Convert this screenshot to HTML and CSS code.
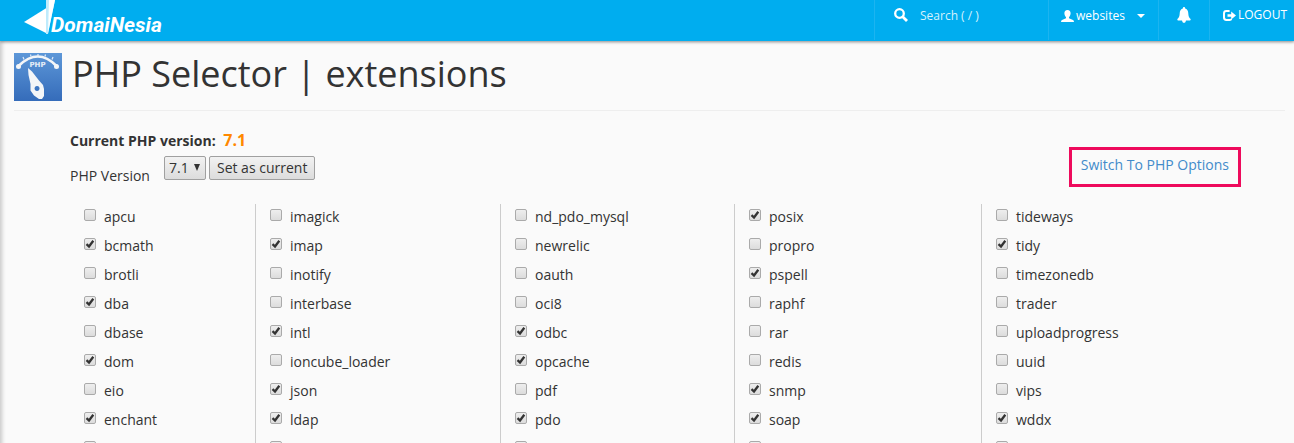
FILE: index.html
```html
<!DOCTYPE html>
<html lang="en">
<head>
    <meta charset="UTF-8">
    <meta name="viewport" content="width=device-width, initial-scale=1.0">
    <title>PHP Selector | extensions</title>
    <link rel="stylesheet" href="styles.css">
</head>
<body>
    <header class="topbar">
        <a href="#" class="brand" aria-label="DomaiNesia">
            <svg width="150" height="41" viewBox="0 0 150 41">
                <path d="M0 22 L24 7 L24 34 Z" fill="#fff"/>
                <path d="M22 0 H31 L24 34 H22 Z" fill="#bfebfc"/>
                <path d="M25 0 H31 L24 33 Z" fill="#fff"/>
                <text x="27" y="32" class="brand-text">DomaiNesia</text>
            </svg>
        </a>
        <nav class="nav">
            <div class="nav-item nav-search">
                <label for="search" aria-label="Search">
                    <svg width="14" height="14" viewBox="0 0 14 14">
                        <circle cx="5.5" cy="5.5" r="4.3" fill="none" stroke="#fff" stroke-width="2.3"/>
                        <path d="M8.7 8.7 L13 13" stroke="#fff" stroke-width="2.8"/>
                    </svg>
                </label>
                <input type="text" id="search" placeholder="Search ( / )">
            </div>
            <a href="#" class="nav-item nav-user">
                <svg width="13" height="12" viewBox="0 0 13 12">
                    <path d="M6.5 0 C8.6 0 9.7 1.4 9.6 3.4 C9.5 5 8.9 6.1 8 7 V8.2 L12 10 Q13 10.5 13 12 H0 Q0 10.5 1 10 L5 8.2 V7 C4.1 6.1 3.5 5 3.4 3.4 C3.3 1.4 4.4 0 6.5 0 Z" fill="#fff"/>
                </svg>
                <span>websites</span>
                <span class="caret"></span>
            </a>
            <a href="#" class="nav-item nav-bell" aria-label="Notifications">
                <svg width="14" height="16" viewBox="0 0 14 16">
                    <path d="M7 0 Q8.2 0 8.2 1.4 C10.6 2.1 11.2 4 11.3 6.5 C11.4 9.2 12 10.7 13.6 12 Q14 13 13 13.6 H9 Q8.8 16 7 16 Q5.2 16 5 13.6 H1 Q0 13 .4 12 C2 10.7 2.6 9.2 2.7 6.5 C2.8 4 3.4 2.1 5.8 1.4 Q5.8 0 7 0 Z" fill="#fff"/>
                </svg>
            </a>
            <a href="#" class="nav-item nav-logout">
                <svg width="13" height="11" viewBox="0 0 13 11">
                    <path d="M6.6 1 H3.4 Q1 1 1 3.4 V7.6 Q1 10 3.4 10 H6.6 Q8 10 8.2 8.8" fill="none" stroke="#fff" stroke-width="2"/>
                    <path d="M4.5 4.2 H8.2 V1.4 L13 5.5 L8.2 9.6 V6.8 H4.5 Z" fill="#fff"/>
                </svg>
                <span>LOGOUT</span>
            </a>
        </nav>
    </header>

    <main class="page">
        <div class="page-title">
            <svg width="48" height="48" viewBox="0 0 48 48">
                <defs>
                    <linearGradient id="tile" x1="0" y1="0" x2="0" y2="1">
                        <stop offset="0" stop-color="#5d97d8"/>
                        <stop offset="1" stop-color="#356cba"/>
                    </linearGradient>
                </defs>
                <rect width="48" height="48" fill="url(#tile)"/>
                <path d="M4.5 13 Q24 -6 42.5 13" fill="none" stroke="#f4f6f8" stroke-width="2.6"/>
                <path d="M10 6.5 L9 4 M17 3.5 L16.5 1.5 M24 3 V1 M31 3.5 L31.5 1.5 M38 6.5 L39 4" stroke="#dfe9f5" stroke-width="1.2"/>
                <circle cx="4.5" cy="13.5" r="2.5" fill="#f4f6f8"/>
                <circle cx="42.5" cy="13.5" r="2.5" fill="#f4f6f8"/>
                <text x="23.5" y="13.5" class="tile-text">PHP</text>
                <path fill-rule="evenodd" fill="#f4f6f8" d="M14 15 L18 18.5 L25 27.5 L29 32 L30 36 L30 43 L28 46 H25 L20 42.5 L16.5 37.5 L16.5 31 L14.5 22 Z M23 33 a2.5 2.5 0 1 0 .1 0 Z"/>
            </svg>
            <h1>PHP Selector | extensions</h1>
        </div>

        <div class="content">
            <div class="version-bar">
                <div class="version-info">
                    <p class="current">Current PHP version: <span class="current-value">7.1</span></p>
                    <form class="version-form">
                        <label for="php-version">PHP Version</label>
                        <select id="php-version">
                            <option selected>7.1</option>
                        </select>
                        <button type="button">Set as current</button>
                    </form>
                </div>
                <a href="#" class="switch-link">Switch To PHP Options</a>
            </div>

            <div class="extensions">
                <div class="ext-column">
                    <label><input type="checkbox">apcu</label>
                    <label><input type="checkbox" checked>bcmath</label>
                    <label><input type="checkbox">brotli</label>
                    <label><input type="checkbox" checked>dba</label>
                    <label><input type="checkbox">dbase</label>
                    <label><input type="checkbox" checked>dom</label>
                    <label><input type="checkbox">eio</label>
                    <label><input type="checkbox" checked>enchant</label>
                    <label><input type="checkbox" aria-label="event"></label>
                </div>
                <div class="ext-column">
                    <label><input type="checkbox">imagick</label>
                    <label><input type="checkbox" checked>imap</label>
                    <label><input type="checkbox">inotify</label>
                    <label><input type="checkbox">interbase</label>
                    <label><input type="checkbox" checked>intl</label>
                    <label><input type="checkbox">ioncube_loader</label>
                    <label><input type="checkbox" checked>json</label>
                    <label><input type="checkbox" checked>ldap</label>
                    <label><input type="checkbox" aria-label="luasandbox"></label>
                </div>
                <div class="ext-column">
                    <label><input type="checkbox">nd_pdo_mysql</label>
                    <label><input type="checkbox">newrelic</label>
                    <label><input type="checkbox">oauth</label>
                    <label><input type="checkbox">oci8</label>
                    <label><input type="checkbox" checked>odbc</label>
                    <label><input type="checkbox" checked>opcache</label>
                    <label><input type="checkbox">pdf</label>
                    <label><input type="checkbox" checked>pdo</label>
                    <label><input type="checkbox" aria-label="pdo_dblib"></label>
                </div>
                <div class="ext-column">
                    <label><input type="checkbox" checked>posix</label>
                    <label><input type="checkbox">propro</label>
                    <label><input type="checkbox" checked>pspell</label>
                    <label><input type="checkbox">raphf</label>
                    <label><input type="checkbox">rar</label>
                    <label><input type="checkbox">redis</label>
                    <label><input type="checkbox" checked>snmp</label>
                    <label><input type="checkbox" checked>soap</label>
                    <label><input type="checkbox" aria-label="sockets"></label>
                </div>
                <div class="ext-column">
                    <label><input type="checkbox">tideways</label>
                    <label><input type="checkbox" checked>tidy</label>
                    <label><input type="checkbox">timezonedb</label>
                    <label><input type="checkbox">trader</label>
                    <label><input type="checkbox">uploadprogress</label>
                    <label><input type="checkbox">uuid</label>
                    <label><input type="checkbox">vips</label>
                    <label><input type="checkbox" checked>wddx</label>
                    <label><input type="checkbox" aria-label="xcache"></label>
                </div>
            </div>
        </div>
    </main>
</body>
</html>
```
FILE: styles.css
```css
* {
    box-sizing: border-box;
}
body {
    display: flex;
    flex-direction: column;
    height: 100vh;
    margin: 0;
    overflow: hidden;
    font-family: "Open Sans", sans-serif;
    font-size: 14px;
    line-height: 20px;
    color: #333;
    background-color: #fafafa;
}

/* top bar */
.topbar {
    display: flex;
    flex-shrink: 0;
    justify-content: space-between;
    height: 41px;
    background-color: #00adef;
    box-shadow: 0 1px 3px rgba(0, 0, 0, 0.4);
    z-index: 1;
}
.brand {
    margin-left: 24px;
}
.brand svg,
.nav svg,
.page-title svg {
    display: block;
    flex-shrink: 0;
}
.brand-text {
    font-family: Roboto, sans-serif;
    font-size: 21px;
    font-weight: bold;
    font-style: italic;
    fill: #fff;
}
.nav {
    display: flex;
    font-size: 12px;
}
.nav-item {
    display: flex;
    align-items: center;
    height: 40px;
    padding-bottom: 10px;
    border-left: 1px solid #1cb4f0;
    color: #fff;
    text-decoration: none;
}
.nav-search {
    width: 174px;
    padding-left: 19px;
    gap: 12px;
}
.nav-search input {
    width: 110px;
    padding: 2px 0 0;
    border: none;
    outline: none;
    background: none;
    color: #fff;
    font: inherit;
}
.nav-search input::placeholder {
    color: #d5f2fd;
}
.nav-user {
    width: 110px;
    padding-left: 12px;
    padding-bottom: 8px;
    gap: 2px;
}
.caret {
    margin-left: 10px;
    border-top: 4px solid #fff;
    border-left: 4px solid transparent;
    border-right: 4px solid transparent;
}
.nav-bell {
    width: 51px;
    justify-content: center;
}
.nav-logout {
    width: 85px;
    padding-left: 13px;
    gap: 2px;
}

/* page */
.page {
    flex: 1;
    padding: 6px 9px 0 14px;
    box-shadow: inset 3px 0 4px -1px rgba(0, 0, 0, 0.2);
}
.page-title {
    display: flex;
    align-items: flex-start;
    gap: 10px;
    height: 64px;
    border-bottom: 1px solid #eee;
}
.page-title svg {
    margin-top: 6px;
}
.tile-text {
    font-family: "DejaVu Sans", sans-serif;
    font-size: 7px;
    font-weight: bold;
    fill: #e6eef8;
    text-anchor: middle;
}
h1 {
    margin: 7px 0 0;
    font-size: 36px;
    font-weight: 400;
    line-height: 40px;
}
.content {
    padding: 19px 44px 0 56px;
}
.version-bar {
    display: flex;
    justify-content: space-between;
    align-items: flex-start;
    height: 74px;
}
.current {
    margin: 0;
    font-weight: bold;
}
.current-value {
    margin-left: 4px;
    font-size: 16px;
    color: #ff8800;
}
.version-form {
    display: flex;
    align-items: flex-start;
    margin-top: 5px;
    gap: 3px;
}
.version-form label {
    margin-right: 11px;
    padding-top: 10px;
}
.version-form select,
.version-form button {
    height: 24px;
    margin: 0;
    border: 1px solid #a0a0a0;
    border-radius: 2px;
    color: #333;
    font: inherit;
    background: linear-gradient(#f2f2f2, #dcdcdc);
}
.version-form select {
    appearance: none;
    width: 42px;
    padding: 0 0 0 4px;
    background: url("data:image/svg+xml,%3Csvg xmlns='http://www.w3.org/2000/svg' width='6' height='7'%3E%3Cpath d='M0 0H6L3 7Z' fill='%23333'/%3E%3C/svg%3E") no-repeat right 5px top 7px, linear-gradient(#f2f2f2, #dcdcdc);
}
.version-form button {
    padding: 0 7px;
}
.switch-link {
    margin-top: 17px;
    padding: 5px 9px 9px;
    border: 3px solid #ee0a5c;
    color: #428bca;
    text-decoration: none;
}

/* extension list */
.extensions {
    display: grid;
    grid-template-columns: 185fr 245fr 234fr 247fr 260fr;
}
.ext-column {
    padding-left: 14px;
}
.ext-column + .ext-column {
    border-left: 1px solid #ccc;
}
.ext-column label {
    display: flex;
    align-items: flex-start;
    gap: 8px;
    height: 29px;
    padding-top: 3px;
}
.ext-column input {
    appearance: none;
    flex-shrink: 0;
    width: 12px;
    height: 12px;
    margin: 2px 0 0;
    border: 1px solid #aaa;
    border-radius: 2px;
    background: linear-gradient(#eee, #dcdcdc);
}
.ext-column input:checked {
    background: url("data:image/svg+xml,%3Csvg xmlns='http://www.w3.org/2000/svg' width='10' height='10'%3E%3Cpath d='M1.5 5.2L4 7.5L8.3 1.8' fill='none' stroke='%23333' stroke-width='2.3'/%3E%3C/svg%3E") no-repeat center, linear-gradient(#eee, #dcdcdc);
}
```
